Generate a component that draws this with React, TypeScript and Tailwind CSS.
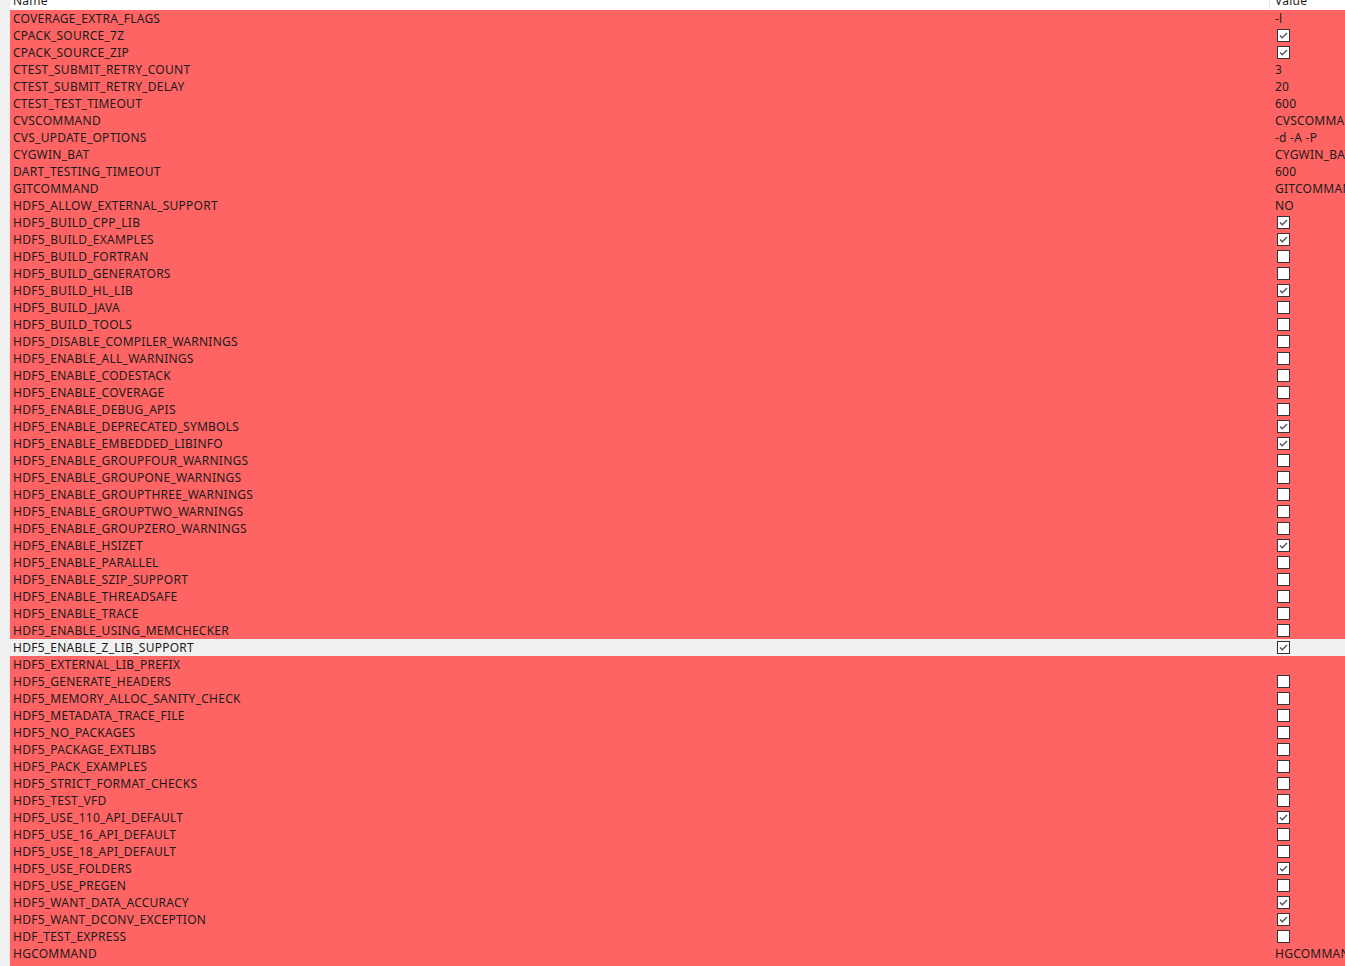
import React from 'react';

type Row = {
  name: string;
  value?: string;
  check?: boolean;
};

const rows: Row[] = [
  { name: 'COVERAGE_EXTRA_FLAGS', value: '-l' },
  { name: 'CPACK_SOURCE_7Z', check: true },
  { name: 'CPACK_SOURCE_ZIP', check: true },
  { name: 'CTEST_SUBMIT_RETRY_COUNT', value: '3' },
  { name: 'CTEST_SUBMIT_RETRY_DELAY', value: '20' },
  { name: 'CTEST_TEST_TIMEOUT', value: '600' },
  { name: 'CVSCOMMAND', value: 'CVSCOMMAND-NOTFOUND' },
  { name: 'CVS_UPDATE_OPTIONS', value: '-d -A -P' },
  { name: 'CYGWIN_BAT', value: 'CYGWIN_BAT-NOTFOUND' },
  { name: 'DART_TESTING_TIMEOUT', value: '600' },
  { name: 'GITCOMMAND', value: 'GITCOMMAND-NOTFOUND' },
  { name: 'HDF5_ALLOW_EXTERNAL_SUPPORT', value: 'NO' },
  { name: 'HDF5_BUILD_CPP_LIB', check: true },
  { name: 'HDF5_BUILD_EXAMPLES', check: true },
  { name: 'HDF5_BUILD_FORTRAN', check: false },
  { name: 'HDF5_BUILD_GENERATORS', check: false },
  { name: 'HDF5_BUILD_HL_LIB', check: true },
  { name: 'HDF5_BUILD_JAVA', check: false },
  { name: 'HDF5_BUILD_TOOLS', check: false },
  { name: 'HDF5_DISABLE_COMPILER_WARNINGS', check: false },
  { name: 'HDF5_ENABLE_ALL_WARNINGS', check: false },
  { name: 'HDF5_ENABLE_CODESTACK', check: false },
  { name: 'HDF5_ENABLE_COVERAGE', check: false },
  { name: 'HDF5_ENABLE_DEBUG_APIS', check: false },
  { name: 'HDF5_ENABLE_DEPRECATED_SYMBOLS', check: true },
  { name: 'HDF5_ENABLE_EMBEDDED_LIBINFO', check: true },
  { name: 'HDF5_ENABLE_GROUPFOUR_WARNINGS', check: false },
  { name: 'HDF5_ENABLE_GROUPONE_WARNINGS', check: false },
  { name: 'HDF5_ENABLE_GROUPTHREE_WARNINGS', check: false },
  { name: 'HDF5_ENABLE_GROUPTWO_WARNINGS', check: false },
  { name: 'HDF5_ENABLE_GROUPZERO_WARNINGS', check: false },
  { name: 'HDF5_ENABLE_HSIZET', check: true },
  { name: 'HDF5_ENABLE_PARALLEL', check: false },
  { name: 'HDF5_ENABLE_SZIP_SUPPORT', check: false },
  { name: 'HDF5_ENABLE_THREADSAFE', check: false },
  { name: 'HDF5_ENABLE_TRACE', check: false },
  { name: 'HDF5_ENABLE_USING_MEMCHECKER', check: false },
  { name: 'HDF5_ENABLE_Z_LIB_SUPPORT', check: true },
  { name: 'HDF5_EXTERNAL_LIB_PREFIX', value: '' },
  { name: 'HDF5_GENERATE_HEADERS', check: false },
  { name: 'HDF5_MEMORY_ALLOC_SANITY_CHECK', check: false },
  { name: 'HDF5_METADATA_TRACE_FILE', check: false },
  { name: 'HDF5_NO_PACKAGES', check: false },
  { name: 'HDF5_PACKAGE_EXTLIBS', check: false },
  { name: 'HDF5_PACK_EXAMPLES', check: false },
  { name: 'HDF5_STRICT_FORMAT_CHECKS', check: false },
  { name: 'HDF5_TEST_VFD', check: false },
  { name: 'HDF5_USE_110_API_DEFAULT', check: true },
  { name: 'HDF5_USE_16_API_DEFAULT', check: false },
  { name: 'HDF5_USE_18_API_DEFAULT', check: false },
  { name: 'HDF5_USE_FOLDERS', check: true },
  { name: 'HDF5_USE_PREGEN', check: false },
  { name: 'HDF5_WANT_DATA_ACCURACY', check: true },
  { name: 'HDF5_WANT_DCONV_EXCEPTION', check: true },
  { name: 'HDF_TEST_EXPRESS', check: false },
  { name: 'HGCOMMAND', value: 'HGCOMMAND-NOTFOUND' },
  { name: 'LIBRARY_OUTPUT_PATH', value: '' },
];

const SELECTED = 'HDF5_ENABLE_Z_LIB_SUPPORT';

const CheckBox = ({ checked }: { checked: boolean }) => (
  <div className="ml-[7px] flex h-[13px] w-[13px] items-center justify-center border border-[#333333] bg-white">
    {checked && (
      <svg width="11" height="11" viewBox="0 0 11 11">
        <path d="M2 5.5 L4.3 7.8 L9 3" fill="none" stroke="#555555" strokeWidth="1.4" />
      </svg>
    )}
  </div>
);

export default function App() {
  return (
    <div className="flex h-[966px] w-[1345px] overflow-hidden bg-[#f0f0f0] text-[12px] tracking-[0.25px] text-[#1b1b1b] [font-family:'Noto_Sans',sans-serif]">
      <div className="ml-[10px] flex flex-1 flex-col overflow-hidden">
        {/* header, scrolled mostly out of view */}
        <div className="flex h-[10px] shrink-0 overflow-hidden bg-white">
          <div className="-mt-[8px] h-[17px] w-[1260px] border-r border-[#e5e5e5] pl-[3px] leading-[17px]">Name</div>
          <div className="-mt-[8px] h-[17px] flex-1 pl-[5px] leading-[17px]">Value</div>
        </div>
        {rows.map((row) => {
          const selected = row.name === SELECTED;
          return (
            <div
              key={row.name}
              className={`flex h-[17px] shrink-0 items-center leading-[17px] ${selected ? 'bg-[#f0f0f0]' : 'bg-[#ff6464]'}`}
            >
              <div className="w-[1260px] shrink-0 whitespace-nowrap pl-[3px]">{row.name}</div>
              <div className="flex flex-1 items-center overflow-hidden whitespace-nowrap">
                {row.check !== undefined ? (
                  <CheckBox checked={row.check} />
                ) : (
                  <span className="pl-[5px]">{row.value}</span>
                )}
              </div>
            </div>
          );
        })}
      </div>
    </div>
  );
}
